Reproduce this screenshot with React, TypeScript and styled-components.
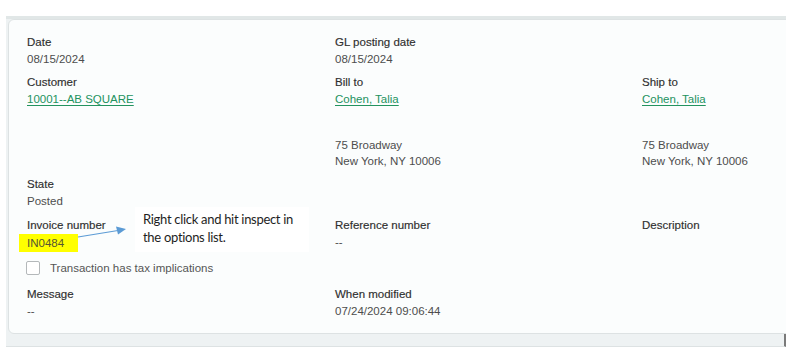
import * as React from 'react'
import styled, { createGlobalStyle } from 'styled-components'

const GlobalStyle = createGlobalStyle`
  html, body {
    margin: 0;
    padding: 0;
    background: #ffffff;
    font-family: 'Liberation Sans', Arial, sans-serif;
  }
`

type FieldProps = {
  label: string
  value?: string
  link?: boolean
  address?: string[]
  highlight?: boolean
}

const Field = ({ label, value, link, address, highlight }: FieldProps) => (
  <FieldBox>
    <Label>{label}</Label>
    {value !== undefined ? (
      link ? (
        <LinkValue href="#">{value}</LinkValue>
      ) : highlight ? (
        <Value>
          <Highlight>{value}</Highlight>
        </Value>
      ) : (
        <Value>{value}</Value>
      )
    ) : null}
    {address ? (
      <Address>
        {address.map((line) => (
          <AddressLine key={line}>{line}</AddressLine>
        ))}
      </Address>
    ) : null}
  </FieldBox>
)

export default function App() {
  const address = ['75 Broadway', 'New York, NY 10006']
  return (
    <>
      <GlobalStyle />
      <Page>
        <Frame>
          <Card>
            <Row>
              <Field label="Date" value="08/15/2024" />
              <Field label="GL posting date" value="08/15/2024" />
            </Row>
            <Row>
              <Field label="Customer" value="10001--AB SQUARE" link />
              <Field label="Bill to" value="Cohen, Talia" link address={address} />
              <Field label="Ship to" value="Cohen, Talia" link address={address} />
            </Row>
            <Row $offset={1}>
              <Field label="State" value="Posted" />
            </Row>
            <Row $offset={1}>
              <Field label="Invoice number" value="IN0484" highlight />
              <Field label="Reference number" value="--" />
              <Field label="Description" />
            </Row>
            <CheckRow>
              <CheckBox />
              <CheckText>Transaction has tax implications</CheckText>
            </CheckRow>
            <Row $offset={3}>
              <Field label="Message" value="--" />
              <Field label="When modified" value="07/24/2024 09:06:44" />
            </Row>

            <Callout>
              <svg width="65" height="45" viewBox="0 0 65 45">
                <line x1="8" y1="31" x2="48" y2="24.5" stroke="#5b9bd5" strokeWidth="1.2" />
                <polygon points="56,23 46,20.5 48,28.5" fill="#5b9bd5" />
              </svg>
              <Note>
                Right click and hit inspect in
                <br />
                the options list.
              </Note>
            </Callout>
          </Card>
          <Footer />
        </Frame>
      </Page>
    </>
  )
}

const Page = styled.div`
  width: 800px;
  height: 354px;
  padding-top: 16px;
  box-sizing: border-box;
  overflow: hidden;
`

const Frame = styled.div`
  width: 780px;
  margin-left: 6px;
  border-top: 3px solid #e1e7e7;
  background: #eef2f3;
  overflow: hidden;
`

const Card = styled.div`
  position: relative;
  margin-left: 2px;
  margin-right: -12px;
  height: 315px;
  box-sizing: border-box;
  padding: 14px 0 0 18px;
  background: #fbfdfd;
  border: 1px solid #dde2e3;
  border-radius: 6px;
  display: flex;
  flex-direction: column;
  gap: 6px;
`

const Footer = styled.div`
  height: 13px;
  border-bottom: 1px solid #dde2e3;
  border-right: 2px solid #7a7a7a;
  box-sizing: border-box;
`

const Row = styled.div<{ $offset?: number }>`
  display: grid;
  grid-template-columns: 308px 307px 1fr;
  margin-top: ${(p) => p.$offset ?? 0}px;
`

const FieldBox = styled.div`
  display: flex;
  flex-direction: column;
  align-items: flex-start;
`

const Label = styled.div`
  font-size: 11.5px;
  line-height: 17px;
  color: #2f2f2f;
  -webkit-text-stroke: 0.15px #2f2f2f;
`

const Value = styled.div`
  font-size: 11.5px;
  line-height: 17px;
  color: #4d4d4d;
`

const LinkValue = styled.a`
  font-size: 11.5px;
  line-height: 17px;
  color: #23935f;
  text-decoration: underline;
  text-underline-offset: 2px;
`

const Highlight = styled.span`
  display: inline-block;
  margin-left: -8px;
  padding: 0 14px 0 8px;
  height: 18px;
  line-height: 18px;
  background: #ffff00;
  color: #555533;
`

const Address = styled.div`
  margin-top: 29px;
`

const AddressLine = styled.div`
  font-size: 11.5px;
  line-height: 16px;
  color: #4d4d4d;
`

const CheckRow = styled.div`
  display: flex;
  align-items: center;
  gap: 10px;
  height: 18px;
  margin-top: 1px;
`

const CheckBox = styled.span`
  width: 14px;
  height: 14px;
  box-sizing: border-box;
  border: 1px solid #b4b8ba;
  border-radius: 2px;
  background: #ffffff;
  margin-left: -1px;
`

const CheckText = styled.span`
  font-size: 11.5px;
  color: #555;
`

const Callout = styled.div`
  position: absolute;
  left: 61px;
  top: 186px;
  display: flex;
  align-items: flex-start;
`

const Note = styled.div`
  margin-top: 1px;
  padding: 3px 16px 6px 8px;
  background: #ffffff;
  font-family: Lato, 'Open Sans', sans-serif;
  font-size: 13px;
  letter-spacing: -0.3px;
  line-height: 18px;
  color: #1e1e1e;
`
